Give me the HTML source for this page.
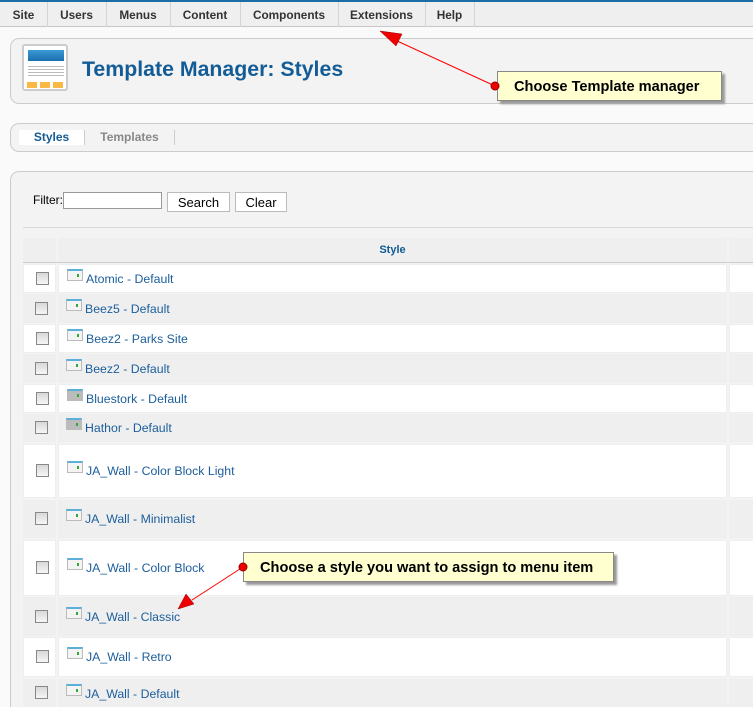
<!DOCTYPE html>
<html style="overflow:hidden;height:707px"><head><style>
body{margin:0;width:753px;height:707px;overflow:hidden;background:#fafafa;font-family:"Liberation Sans",Arial,sans-serif;position:relative}
.a{position:absolute}
.menu{left:0;top:0;width:753px;height:27px;background:#efefef;border-top:2px solid #1a6ea8;border-bottom:1px solid #c8c8c8;box-sizing:border-box}
.menu span{position:absolute;top:0;height:25px;line-height:26px;font-size:11.8px;font-weight:bold;color:#333;border-right:1px solid #d4d4d4;text-align:center}
.panel{background:#f3f3f3;border:1px solid #ccc;border-radius:9px;box-sizing:border-box}
.row{left:23px;width:760px}
.c{position:absolute;top:0;bottom:0}
.cb{left:0;width:33px}
.st{left:35px;width:669px}
.ex{left:706px;width:60px}
.w .c{background:#fff;border:1px solid #eee;box-sizing:border-box}
.g .c{background:#efefef}
.chk{position:absolute;left:12px;top:50%;margin-top:-7px;width:13px;height:13px;border:1px solid #888;background:linear-gradient(#d8d8d8,#f6f6f6);box-sizing:border-box}
.lbl{position:absolute;left:8px;top:50%;margin-top:-7px;height:14px;padding-left:19px;font-size:12.3px;color:#1b5e9b;white-space:nowrap;line-height:14px}
.ic{position:absolute;left:0;top:-3px;width:16px;height:12px;border:1px solid #bbb;border-top:2px solid #5ab0d8;background:#f4f4f4;box-sizing:border-box}
.ic.d{background:#bbb}
.ic:after{content:"";position:absolute;right:3px;top:3px;width:2px;height:3px;background:#3a3}
.call{background:#ffffd0;border:1px solid #888;box-shadow:3px 3px 2px #999;font-weight:bold;font-size:14.6px;color:#000}
</style></head><body>
<div class="a menu">
<span style="left:0;width:47px">Site</span>
<span style="left:47px;width:59px">Users</span>
<span style="left:106px;width:64px">Menus</span>
<span style="left:170px;width:70px">Content</span>
<span style="left:240px;width:98px">Components</span>
<span style="left:338px;width:87px">Extensions</span>
<span style="left:425px;width:49px">Help</span>
</div>
<div class="a panel" style="left:10px;top:38px;width:760px;height:66px"></div>
<div class="a" style="left:22px;top:44px;width:46px;height:47px;background:#fff;border:2px solid #ccc;border-radius:3px;box-sizing:border-box">
<div class="a" style="left:4px;top:4px;width:36px;height:11px;background:linear-gradient(#3a9ad4,#1b6fae)"></div>
<div class="a" style="left:4px;top:18px;width:36px;height:14px;background:repeating-linear-gradient(#fff 0,#fff 2px,#bbb 2px,#bbb 3px)"></div>
<div class="a" style="left:3px;top:36px;width:10px;height:6px;background:#fbb844"></div>
<div class="a" style="left:16px;top:36px;width:10px;height:6px;background:#fbb844"></div>
<div class="a" style="left:29px;top:36px;width:10px;height:6px;background:#fbb844"></div>
</div>
<div class="a" style="left:82px;top:57px;font-size:21.3px;font-weight:bold;color:#135c95">Template Manager: Styles</div>
<div class="a panel" style="left:10px;top:123px;width:760px;height:29px"></div>
<div class="a" style="left:19px;top:130px;width:65px;height:15px;background:#fff;border-right:1px solid #ccc;font-size:12px;font-weight:bold;color:#135c95;text-align:center;line-height:15px">Styles</div>
<div class="a" style="left:85px;top:130px;width:89px;height:15px;border-right:1px solid #ccc;font-size:12px;font-weight:bold;color:#888;text-align:center;line-height:15px">Templates</div>
<div class="a panel" style="left:10px;top:171px;width:760px;height:560px"></div>
<div class="a" style="left:33px;top:193px;font-size:12px;color:#000">Filter:</div>
<div class="a" style="left:63px;top:192px;width:99px;height:17px;border:1px solid #999;background:#fff;box-sizing:border-box"></div>
<div class="a" style="left:167px;top:192px;width:63px;height:20px;border:1px solid #bbb;background:#fff;box-sizing:border-box;font-size:13px;text-align:center;line-height:19px">Search</div>
<div class="a" style="left:235px;top:192px;width:52px;height:20px;border:1px solid #bbb;background:#fff;box-sizing:border-box;font-size:13px;text-align:center;line-height:19px">Clear</div>
<div class="a" style="left:23px;top:227px;width:740px;height:1px;background:#d8d8d8"></div>
<div class="a row g" style="top:238px;height:24px"><div class="c cb"></div><div class="c st" style="font-size:11px;font-weight:bold;color:#135c95;text-align:center;line-height:24px">Style</div><div class="c ex"></div></div>
<div class="a" style="left:23px;top:262px;width:740px;height:1px;background:#ccc"></div>

<div class="a row w" style="top:264px;height:29px"><div class="c cb"><i class="chk"></i></div><div class="c st"><span class="lbl"><i class="ic"></i>Atomic - Default</span></div><div class="c ex"></div></div>
<div class="a row g" style="top:294px;height:29px"><div class="c cb"><i class="chk"></i></div><div class="c st"><span class="lbl"><i class="ic"></i>Beez5 - Default</span></div><div class="c ex"></div></div>
<div class="a row w" style="top:324px;height:29px"><div class="c cb"><i class="chk"></i></div><div class="c st"><span class="lbl"><i class="ic"></i>Beez2 - Parks Site</span></div><div class="c ex"></div></div>
<div class="a row g" style="top:354px;height:29px"><div class="c cb"><i class="chk"></i></div><div class="c st"><span class="lbl"><i class="ic"></i>Beez2 - Default</span></div><div class="c ex"></div></div>
<div class="a row w" style="top:384px;height:29px"><div class="c cb"><i class="chk"></i></div><div class="c st"><span class="lbl"><i class="ic d"></i>Bluestork - Default</span></div><div class="c ex"></div></div>
<div class="a row g" style="top:414px;height:28px"><div class="c cb"><i class="chk"></i></div><div class="c st"><span class="lbl"><i class="ic d"></i>Hathor - Default</span></div><div class="c ex"></div></div>
<div class="a row w" style="top:444px;height:54px"><div class="c cb"><i class="chk"></i></div><div class="c st"><span class="lbl"><i class="ic"></i>JA_Wall - Color Block Light</span></div><div class="c ex"></div></div>
<div class="a row g" style="top:500px;height:38px"><div class="c cb"><i class="chk"></i></div><div class="c st"><span class="lbl"><i class="ic"></i>JA_Wall - Minimalist</span></div><div class="c ex"></div></div>
<div class="a row w" style="top:540px;height:56px"><div class="c cb"><i class="chk"></i></div><div class="c st"><span class="lbl"><i class="ic"></i>JA_Wall - Color Block</span></div><div class="c ex"></div></div>
<div class="a row g" style="top:597px;height:39px"><div class="c cb"><i class="chk"></i></div><div class="c st"><span class="lbl"><i class="ic"></i>JA_Wall - Classic</span></div><div class="c ex"></div></div>
<div class="a row w" style="top:637px;height:40px"><div class="c cb"><i class="chk"></i></div><div class="c st"><span class="lbl"><i class="ic"></i>JA_Wall - Retro</span></div><div class="c ex"></div></div>
<div class="a row g" style="top:679px;height:40px"><div class="c cb"><i class="chk" style="top:7px;margin-top:0"></i></div><div class="c st"><span class="lbl" style="top:8px;margin-top:0"><i class="ic"></i>JA_Wall - Default</span></div><div class="c ex"></div></div>

<div class="a call" style="left:497px;top:71px;width:225px;height:30px;line-height:30px;padding-left:16px;box-sizing:border-box">Choose Template manager</div>
<div class="a call" style="left:243px;top:552px;width:371px;height:30px;line-height:30px;padding-left:16px;box-sizing:border-box">Choose a style you want to assign to menu item</div>
<svg class="a" style="left:0;top:0" width="753" height="707">
<line x1="495" y1="86" x2="395" y2="40" stroke="#f00" stroke-width="1"/>
<polygon points="380,31 402,34 396,46" fill="#e00" stroke="#900" stroke-width="0.5"/>
<circle cx="495" cy="86" r="4" fill="#e00" stroke="#900"/>
<line x1="243" y1="567" x2="192" y2="600" stroke="#f00" stroke-width="1"/>
<polygon points="178,609 186,594 194,604" fill="#e00" stroke="#900" stroke-width="0.5"/>
<circle cx="243" cy="567" r="4" fill="#e00" stroke="#900"/>
</svg>
</body></html>
